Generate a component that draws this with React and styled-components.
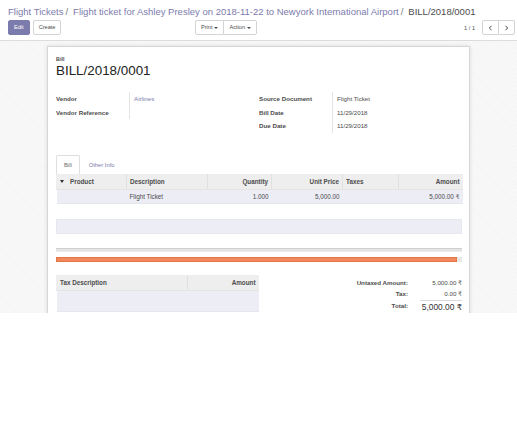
import React from "react";
import styled, { createGlobalStyle } from "styled-components";

const GlobalStyle = createGlobalStyle`
  html, body { margin: 0; padding: 0; background: #fff; }
  body { font-family: "Liberation Sans", Arial, "DejaVu Sans", sans-serif; color: #4c4c4c; }
  * { box-sizing: border-box; }
`;

const Page = styled.div`
  width: 517px;
`;

const ControlPanel = styled.div`
  height: 41px;
  padding: 5px 2px 0 8px;
  border-bottom: 1px solid #dcdcdc;
  background: #fff;
`;

const Breadcrumb = styled.div`
  font-size: 9.5px;
  line-height: 13px;
  white-space: nowrap;
  color: #4c4c4c;
`;

const Crumb = styled.span`
  color: ${(p) => (p.$active ? "#4c4c4c" : "#7c7bad")};
`;

const Sep = styled.span`
  color: #777;
  padding: 0 5px 0 2px;
`;

const ButtonRow = styled.div`
  display: grid;
  grid-template-columns: 249px 1fr;
  margin-top: 2px;
  align-items: center;
`;

const LeftCol = styled.div`
  display: flex;
  justify-content: space-between;
  align-items: center;
`;

const RightCol = styled.div`
  display: flex;
  justify-content: flex-end;
  align-items: center;
`;

const Group = styled.div`
  display: flex;
  gap: ${(p) => p.$gap || 0}px;
`;

const Btn = styled.button`
  height: 15px;
  padding: 0 ${(p) => p.$px ?? 5}px;
  font-family: inherit;
  font-size: 5.6px;
  line-height: 13px;
  border: 1px solid ${(p) => (p.$primary ? "#7c7bad" : "#d4d4d4")};
  background: ${(p) => (p.$primary ? "#7c7bad" : "#fff")};
  color: ${(p) => (p.$primary ? "#fff" : "#4c4c4c")};
  border-radius: ${(p) => p.$radius || "2px"};
  display: inline-flex;
  align-items: center;
  gap: 2px;
  cursor: pointer;
`;

const Caret = styled.span`
  width: 0;
  height: 0;
  border-left: 2px solid transparent;
  border-right: 2px solid transparent;
  border-top: 2px solid #4c4c4c;
`;

const PagerText = styled.span`
  font-size: 5.6px;
  margin-right: 7px;
  color: #4c4c4c;
`;

const Content = styled.div`
  height: 272px;
  overflow: hidden;
  background-color: #f8f8f8;
  background-image: repeating-linear-gradient(45deg, rgba(0,0,0,0.012) 0 1px, transparent 1px 3px);
  padding-top: 5px;
`;

const Sheet = styled.div`
  width: 423px;
  margin: 0 auto;
  min-height: 300px;
  background: #fff;
  border: 1px solid #d6d6d6;
  box-shadow: 0 0 4px rgba(0, 0, 0, 0.12);
  padding: 9px 7px 0 8px;
`;

const TitleLabel = styled.div`
  font-size: 5.4px;
  font-weight: bold;
  line-height: 7px;
  color: #4c4c4c;
`;

const Title = styled.h1`
  margin: 0;
  font-size: 13.4px;
  font-weight: normal;
  line-height: 15px;
  color: #222;
`;

const Groups = styled.div`
  display: grid;
  grid-template-columns: 203px 203px;
  margin-top: 14px;
`;

const FieldTable = styled.div`
  display: grid;
  grid-template-columns: 73px 1fr;
  align-content: start;
`;

const FLabel = styled.div`
  font-size: 6.2px;
  font-weight: bold;
  color: #4c4c4c;
  height: 13.5px;
  line-height: 13.5px;
  white-space: nowrap;
`;

const FValue = styled.div`
  font-size: 6.2px;
  color: ${(p) => (p.$link ? "#7c7bad" : "#4c4c4c")};
  height: 13.5px;
  line-height: 13.5px;
  border-left: 1px solid #e4e4e4;
  padding-left: 4px;
`;

const Tabs = styled.div`
  display: flex;
  margin-top: 22px;
  height: 19px;
`;

const Tab = styled.div`
  font-size: 5.8px;
  line-height: 18px;
  padding: 0 7px;
  color: ${(p) => (p.$active ? "#666" : "#7c7bad")};
  border: 1px solid ${(p) => (p.$active ? "#dedede" : "transparent")};
  border-bottom: none;
  border-radius: 2px 2px 0 0;
  margin-right: 1px;
`;

const Table = styled.table`
  width: ${(p) => p.$w || 406}px;
  border-collapse: collapse;
  table-layout: fixed;
  font-size: 6.3px;
`;

const Th = styled.th`
  background: #eeeeee;
  padding: 4px 3px 4px;
  line-height: 7px;
  font-weight: bold;
  color: #4c4c4c;
  text-align: ${(p) => p.$align || "left"};
  border-left: 1px solid ${(p) => (p.$first ? "#eeeeee" : "#e0e0e0")};
  border-bottom: 1px solid #e4e4e4;
  white-space: nowrap;
`;

const Td = styled.td`
  padding: 3px 3px;
  line-height: 7px;
  height: ${(p) => p.$h || 14}px;
  color: #4c4c4c;
  text-align: ${(p) => p.$align || "left"};
  white-space: nowrap;
`;

const Tr = styled.tr`
  background: ${(p) => (p.$tint ? "#ededf6" : "#fff")};
  border-bottom: 1px solid ${(p) => (p.$tint ? "#e6e6ee" : "transparent")};
`;

const TriDown = styled.span`
  display: inline-block;
  width: 0;
  height: 0;
  border-left: 2px solid transparent;
  border-right: 2px solid transparent;
  border-top: 3px solid #333;
  margin: 0 6px 1px 0;
  vertical-align: middle;
`;

const Spacer = styled.div`
  height: ${(p) => p.$h}px;
`;

const TintBand = styled.div`
  height: 15px;
  background: #ededf6;
  border: 1px solid #e7e7ef;
`;

const GreyBar = styled.div`
  height: 4px;
  background: #e4e4e4;
  border-top: 1px solid #d0d0d0;
  border-bottom: 1px solid #ececec;
`;

const ScrollTrack = styled.div`
  height: 5px;
  background: #e8e8e8;
  display: flex;
`;

const ScrollThumb = styled.div`
  height: 5px;
  background: #f08a5d;
  border: 1px solid #e57545;
`;

const Bottom = styled.div`
  display: grid;
  grid-template-columns: 202px 1fr;
`;

const Totals = styled.div`
  display: grid;
  grid-template-columns: 1fr 50px;
  padding-top: 2px;
  align-content: start;
`;

const TLabel = styled.div`
  font-size: 6.2px;
  font-weight: bold;
  text-align: right;
  color: #4c4c4c;
  padding-right: 4px;
  height: ${(p) => p.$h || 11.5}px;
  line-height: ${(p) => p.$h || 11.5}px;
`;

const TValue = styled.div`
  font-size: ${(p) => (p.$big ? "8.4px" : "6.2px")};
  color: ${(p) => (p.$big ? "#333" : "#4c4c4c")};
  text-align: right;
  height: ${(p) => p.$h || 11.5}px;
  line-height: ${(p) => p.$h || 11.5}px;
  border-top: ${(p) => (p.$sep ? "1px solid #dcdcdc" : "none")};
  margin-left: ${(p) => (p.$sep ? "8px" : "0")};
  white-space: nowrap;
`;

const Chevron = ({ dir }) => (
  <svg width="5" height="6" viewBox="0 0 5 6">
    <path
      d={dir === "left" ? "M3.5 0.8 L1.3 3 L3.5 5.2" : "M1.5 0.8 L3.7 3 L1.5 5.2"}
      fill="none"
      stroke="#444"
      strokeWidth="1"
    />
  </svg>
);

export default function App() {
  return (
    <Page>
      <GlobalStyle />
      <ControlPanel>
        <Breadcrumb>
          <Crumb>Flight Tickets</Crumb>
          <Sep>/</Sep>
          <Crumb>Flight ticket for Ashley Presley on 2018-11-22 to Newyork International Airport</Crumb>
          <Sep>/</Sep>
          <Crumb $active>BILL/2018/0001</Crumb>
        </Breadcrumb>
        <ButtonRow>
          <LeftCol>
            <Group $gap={3}>
              <Btn $primary>Edit</Btn>
              <Btn>Create</Btn>
            </Group>
            <Group>
              <Btn $px={5} $radius="2px 0 0 2px">Print <Caret /></Btn>
              <Btn $px={5} $radius="0 2px 2px 0" style={{ marginLeft: -1 }}>Action <Caret /></Btn>
            </Group>
          </LeftCol>
          <RightCol>
            <PagerText>1 / 1</PagerText>
            <Btn $px={5} $radius="2px 0 0 2px"><Chevron dir="left" /></Btn>
            <Btn $px={5} $radius="0 2px 2px 0" style={{ marginLeft: -1 }}><Chevron dir="right" /></Btn>
          </RightCol>
        </ButtonRow>
      </ControlPanel>
      <Content>
        <Sheet>
          <TitleLabel>Bill</TitleLabel>
          <Title>BILL/2018/0001</Title>
          <Groups>
            <FieldTable>
              <FLabel>Vendor</FLabel>
              <FValue $link>Airlines</FValue>
              <FLabel>Vendor Reference</FLabel>
              <FValue></FValue>
            </FieldTable>
            <FieldTable>
              <FLabel>Source Document</FLabel>
              <FValue>Flight Ticket</FValue>
              <FLabel>Bill Date</FLabel>
              <FValue>11/29/2018</FValue>
              <FLabel>Due Date</FLabel>
              <FValue>11/29/2018</FValue>
            </FieldTable>
          </Groups>
          <Tabs>
            <Tab $active>Bill</Tab>
            <Tab>Other Info</Tab>
          </Tabs>
          <Table>
            <colgroup>
              <col style={{ width: 70 }} />
              <col style={{ width: 81 }} />
              <col style={{ width: 64 }} />
              <col style={{ width: 71 }} />
              <col style={{ width: 56 }} />
              <col style={{ width: 64 }} />
            </colgroup>
            <thead>
              <tr>
                <Th $first><TriDown />Product</Th>
                <Th>Description</Th>
                <Th $align="right">Quantity</Th>
                <Th $align="right">Unit Price</Th>
                <Th>Taxes</Th>
                <Th $align="right">Amount</Th>
              </tr>
            </thead>
            <tbody>
              <Tr $tint>
                <Td></Td>
                <Td>Flight Ticket</Td>
                <Td $align="right">1.000</Td>
                <Td $align="right">5,000.00</Td>
                <Td></Td>
                <Td $align="right">5,000.00 ₹</Td>
              </Tr>
            </tbody>
          </Table>
          <Spacer $h={15} />
          <TintBand />
          <Spacer $h={14} />
          <GreyBar />
          <Spacer $h={5} />
          <ScrollTrack>
            <ScrollThumb style={{ width: 401 }} />
          </ScrollTrack>
          <Spacer $h={13} />
          <Bottom>
            <Table $w={202}>
              <colgroup>
                <col style={{ width: 131 }} />
                <col style={{ width: 71 }} />
              </colgroup>
              <thead>
                <tr>
                  <Th $first>Tax Description</Th>
                  <Th $align="right">Amount</Th>
                </tr>
              </thead>
              <tbody>
                <Tr $tint>
                  <Td $h={14}></Td>
                  <Td $h={14}></Td>
                </Tr>
              </tbody>
            </Table>
            <Totals>
              <TLabel>Untaxed Amount:</TLabel>
              <TValue>5,000.00 ₹</TValue>
              <TLabel>Tax:</TLabel>
              <TValue>0.00 ₹</TValue>
              <TLabel $h={12}>Total:</TLabel>
              <TValue $sep $big $h={12}>5,000.00 ₹</TValue>
            </Totals>
          </Bottom>
        </Sheet>
      </Content>
    </Page>
  );
}
